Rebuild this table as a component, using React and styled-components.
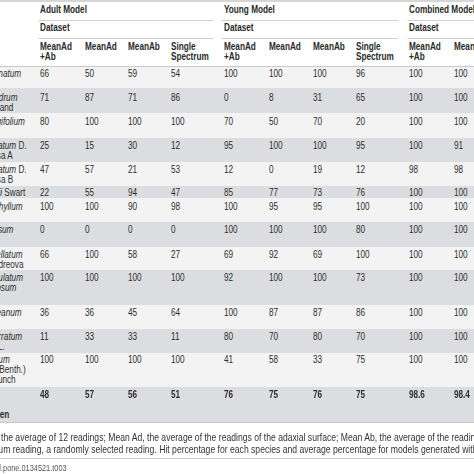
import React from "react";
import styled, { createGlobalStyle } from "styled-components";

const Global = createGlobalStyle`
  * { box-sizing: border-box; }
  html, body { margin: 0; padding: 0; background: #ffffff; overflow: hidden; }
  body {
    font-family: "Liberation Sans", Arial, Helvetica, sans-serif;
    color: #2e2e2e;
  }
`;

/* The reference is a horizontally squeezed render (about 82%), so the sheet is
   laid out at full width and compressed on the x axis as a whole. */
const SQUEEZE = 0.82;
const px = (v) => `${(v / SQUEEZE).toFixed(2)}px`;

const COLS = [112, 45, 43, 43, 53, 45, 44, 43, 53, 45, 45, 43, 53].map(px).join(" ");

const Page = styled.div`
  width: 474px;
  height: 474px;
  overflow: hidden;
  background: #fff;
`;

const Sheet = styled.div`
  width: ${px(700)};
  margin-left: -74px;
  transform: scaleX(${SQUEEZE});
  transform-origin: 0 0;
`;

const Table = styled.div`
  border-top: 2px solid #d6d6d8;
  border-bottom: 1px solid #c9c9cc;
  font-size: 10px;
  line-height: 10px;
`;

const Row = styled.div`
  display: grid;
  grid-template-columns: ${COLS};
  height: ${(p) => p.$h}px;
  background: ${(p) => (p.$tone === "gray" ? "#dcdde0" : p.$tone === "light" ? "#f3f3f4" : "#ffffff")};
  border-bottom: ${(p) => (p.$rule ? "1px solid #c9c9cc" : "none")};
`;

const GroupCell = styled.div`
  grid-column: span 4;
  margin-right: ${px(9)};
  padding: ${(p) => p.$pad}px 0 0 ${px(2)};
  border-bottom: 1px solid #cfcfd2;
  font-weight: 700;
  color: #2a2a2a;
  white-space: nowrap;
`;

const HeadCell = styled.div`
  padding: 3px 0 0 ${px(2)};
  font-weight: 700;
  color: #2a2a2a;
  white-space: nowrap;
`;

const Cell = styled.div`
  padding: ${(p) => p.$pad}px 0 0 ${px(2)};
  font-weight: ${(p) => (p.$bold ? 700 : 400)};
  white-space: nowrap;
`;

const NameCell = styled.div`
  padding: ${(p) => p.$pad}px 0 0 ${px(4)};
  font-style: ${(p) => (p.$bold ? "normal" : "italic")};
  font-weight: ${(p) => (p.$bold ? 700 : 400)};
  white-space: nowrap;
  overflow: hidden;
`;

const Roman = styled.span`
  font-style: normal;
`;

const Footnote = styled.div`
  padding: 8px 0 3px ${px(22.6)};
  border-bottom: 1px solid #c9c9cc;
  font-size: 10.5px;
  line-height: 12px;
  color: #333;
  white-space: nowrap;
`;

const Doi = styled.div`
  padding: 4px 0 0 ${px(12.2)};
  font-size: 9px;
  line-height: 11px;
  color: #555;
  white-space: nowrap;
`;

const rows = [
  { h: 21, pad: 2, name: [["Eschweilera acuminatum"]], v: ["66", "50", "59", "54", "100", "100", "100", "96", "100", "100", "100", "96"] },
  { h: 25, pad: 5, name: [["Micropholis pentandrum"], ["Sandwith ex Marchand", true]], v: ["71", "87", "71", "86", "0", "8", "31", "65", "100", "100", "100", "92"] },
  { h: 25, pad: 4, name: [["Eschweilera oblongifolium"]], v: ["80", "100", "100", "100", "70", "50", "70", "20", "100", "100", "100", "95"] },
  { h: 24, pad: 3, name: [["Eschweilera apiculatum", " D."], ["Daly, morpho rugosa A", true]], v: ["25", "15", "30", "12", "95", "100", "100", "95", "100", "91", "100", "90"] },
  { h: 24, pad: 3, name: [["Eschweilera apiculatum", " D."], ["Daly, morpho rugosa B", true]], v: ["47", "57", "21", "53", "12", "0", "19", "12", "98", "98", "95", "88"] },
  { h: 12, pad: 2, name: [["Pouteria guyanensii", " Swart"]], v: ["22", "55", "94", "47", "85", "77", "73", "76", "100", "100", "100", "100"] },
  { h: 24, pad: 4, name: [["Micropholis heptaphyllum"]], v: ["100", "100", "90", "98", "100", "95", "95", "100", "100", "100", "100", "100"] },
  { h: 25, pad: 3, name: [["Micropholis venulosum"]], v: ["0", "0", "0", "0", "100", "100", "100", "80", "100", "100", "100", "100"] },
  { h: 23, pad: 3, name: [["Eschweilera pedicellatum"], ["Sandwith & Alexandreova", true]], v: ["66", "100", "58", "27", "69", "92", "69", "100", "100", "100", "100", "100"] },
  { h: 35, pad: 3, name: [["Eschweilera denticulatum"], ["var. longipedunculosum"]], v: ["100", "100", "100", "100", "92", "100", "100", "73", "100", "100", "100", "100"] },
  { h: 24, pad: 3, name: [["Eschweilera spruceanum"]], v: ["36", "36", "45", "64", "100", "87", "87", "86", "100", "100", "100", "100"] },
  { h: 24, pad: 3, name: [["Eschweilera subserratum"], ["Spruce ex Mart. & L.", true]], v: ["11", "33", "33", "11", "80", "70", "80", "70", "100", "100", "100", "100"] },
  { h: 34, pad: 2, name: [["Micropholis cuneatum"], ["subsp. guianense", " (Benth.)"], ["(Mart.) Penn. ex Munch", true]], v: ["100", "100", "100", "100", "41", "58", "33", "75", "100", "100", "100", "100"] },
];

const total = {
  h: 35,
  pad: 3,
  name: ["Average hit", "percentage per", "model per specimen"],
  v: ["48", "57", "56", "51", "76", "75", "76", "75", "98.6", "98.4", "98.9", "97.6"],
};

const colHeads = [
  ["MeanAd", "+Ab"], ["MeanAd"], ["MeanAb"], ["Single", "Spectrum"],
  ["MeanAd", "+Ab"], ["MeanAd"], ["MeanAb"], ["Single", "Spectrum"],
  ["MeanAd", "+Ab"], ["MeanAd"], ["MeanAb"], ["Single", "Spectrum"],
];

function NameLines({ lines }) {
  return lines.map((ln, i) => {
    const [text, extra] = ln;
    const roman = extra === true;
    return (
      <React.Fragment key={i}>
        {i > 0 && <br />}
        {roman ? <Roman>{text}</Roman> : text}
        {typeof extra === "string" && <Roman>{extra}</Roman>}
      </React.Fragment>
    );
  });
}

export default function App() {
  return (
    <Page>
      <Global />
      <Sheet>
        <Table>
          <Row $h={19}>
            <div />
            <GroupCell $pad={3}>Adult Model</GroupCell>
            <GroupCell $pad={3}>Young Model</GroupCell>
            <GroupCell $pad={3}>Combined Model</GroupCell>
          </Row>
          <Row $h={18}>
            <div />
            <GroupCell $pad={2}>Dataset</GroupCell>
            <GroupCell $pad={2}>Dataset</GroupCell>
            <GroupCell $pad={2}>Dataset</GroupCell>
          </Row>
          <Row $h={28} $rule>
            <div />
            {colHeads.map((h, i) => (
              <HeadCell key={i}>
                {h[0]}
                {h[1] && (
                  <>
                    <br />
                    {h[1]}
                  </>
                )}
              </HeadCell>
            ))}
          </Row>
          {rows.map((r, i) => (
            <Row key={i} $h={r.h} $tone={i % 2 === 0 ? "light" : "gray"}>
              <NameCell $pad={r.pad}>
                <NameLines lines={r.name} />
              </NameCell>
              {r.v.map((n, j) => (
                <Cell key={j} $pad={r.pad}>{n}</Cell>
              ))}
            </Row>
          ))}
          <Row $h={total.h} $tone="gray">
            <NameCell $pad={total.pad} $bold>
              {total.name.map((t, i) => (
                <React.Fragment key={i}>
                  {i > 0 && <br />}
                  {t}
                </React.Fragment>
              ))}
            </NameCell>
            {total.v.map((n, j) => (
              <Cell key={j} $pad={total.pad} $bold>{n}</Cell>
            ))}
          </Row>
        </Table>
        <Footnote>
          MeanAd+Ab, the average of 12 readings; Mean Ad, the average of the readings of the adaxial surface; Mean Ab, the average of the readings of the abaxial surface;
          <br />
          Single spectrum reading, a randomly selected reading. Hit percentage for each species and average percentage for models generated with each dataset.
        </Footnote>
        <Doi>doi:10.1371/journal.pone.0134521.t003</Doi>
      </Sheet>
    </Page>
  );
}
